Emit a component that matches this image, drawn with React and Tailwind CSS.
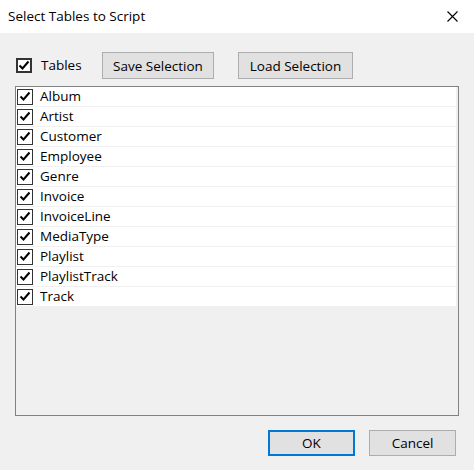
import React from "react";

const items = ["Album","Artist","Customer","Employee","Genre","Invoice","InvoiceLine","MediaType","Playlist","PlaylistTrack","Track"];

function Check({ big }) {
  return (
    <div className={big ? "w-[16px] h-[15px] border-2 border-[#333333] bg-white flex items-center justify-center shrink-0" : "w-[16px] h-[16px] border border-[#333333] bg-white flex items-center justify-center shrink-0"}>
      <svg width="12" height="11" viewBox="0 0 12 11">
        <path d="M1.5 5.5 L4.5 8.5 L10.5 1.5" fill="none" stroke="#000" strokeWidth="2" />
      </svg>
    </div>
  );
}

export default function App() {
  return (
    <div className="w-[474px] h-[470px] bg-[#f0f0f0] flex flex-col text-black" style={{ fontFamily: '"Open Sans", "Noto Sans", sans-serif' }}>
      <div className="h-[33px] bg-white flex items-center justify-between pl-[8px] pr-[16px]">
        <span className="text-[13.5px]">Select Tables to Script</span>
        <svg width="11" height="11" viewBox="0 0 11 11">
          <path d="M0.5 0.5 L10.5 10.5 M10.5 0.5 L0.5 10.5" stroke="#000" strokeWidth="1.1" />
        </svg>
      </div>
      <div className="flex items-center h-[27px] mt-[19px] pl-[16px]">
        <div className="w-[86px] flex items-center">
          <Check big />
          <span className="ml-[9px] text-[13.5px]">Tables</span>
        </div>
        <button className="w-[112px] h-[27px] bg-[#e1e1e1] border border-[#adadad] text-[13.5px] pt-[1px]">Save Selection</button>
        <button className="ml-[24px] w-[115px] h-[27px] bg-[#e1e1e1] border border-[#adadad] text-[13.5px] pt-[1px]">Load Selection</button>
      </div>
      <div className="mt-[7px] ml-[15px] w-[444px] h-[330px] border border-[#828282] bg-[#f0f0f0] pr-[2px]">
        {items.map((t) => (
          <div key={t} className="h-[19px] mb-[1px] bg-white flex items-center pl-[1px]">
            <Check />
            <span className="ml-[7px] text-[13.5px] leading-none">{t}</span>
          </div>
        ))}
      </div>
      <div className="flex mt-[14px] pl-[268px]">
        <button className="w-[87px] h-[26px] bg-[#e1e1e1] border-2 border-[#0078d7] text-[13.5px]">OK</button>
        <button className="ml-[14px] w-[87px] h-[26px] bg-[#e1e1e1] border border-[#adadad] text-[13.5px]">Cancel</button>
      </div>
    </div>
  );
}
